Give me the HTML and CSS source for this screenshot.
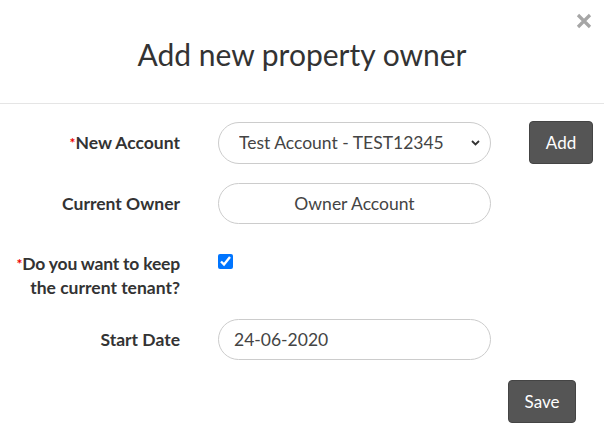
FILE: index.html
```html
<!DOCTYPE html>
<html>
<head>
<meta charset="utf-8">
<link rel="stylesheet" href="styles.css">
</head>
<body>
<div class="modal">
  <div class="modal-header">
    <h1 class="title">Add new property owner</h1>
    <button class="close" aria-label="Close">
      <svg width="16" height="16" viewBox="0 0 16 16"><path d="M2 2 L14 14 M14 2 L2 14" stroke="#a6a6a6" stroke-width="3.2" stroke-linecap="butt"/></svg>
    </button>
  </div>
  <div class="modal-body">
    <div class="row row-tall">
      <label class="label"><span class="req">*</span>New Account</label>
      <div class="control select-wrap">
        <select class="field select"><option>Test Account - TEST12345</option></select>
        <svg class="chevron" width="9" height="6" viewBox="0 0 9 6"><path d="M1 1 L4.5 4.5 L8 1" fill="none" stroke="#333" stroke-width="1.8"/></svg>
      </div>
      <button class="btn">Add</button>
    </div>
    <div class="row">
      <label class="label">Current Owner</label>
      <div class="control">
        <div class="field center">Owner Account</div>
      </div>
    </div>
    <div class="row row-top">
      <label class="label"><span class="req">*</span><span class="tight">Do you want to keep</span><br>the current tenant?</label>
      <div class="control">
        <input type="checkbox" class="check" checked>
      </div>
    </div>
    <div class="row">
      <label class="label">Start Date</label>
      <div class="control">
        <div class="field date">24-06-2020</div>
      </div>
    </div>
    <div class="footer">
      <button class="btn">Save</button>
    </div>
  </div>
</div>
</body>
</html>
```
FILE: styles.css
```css
html, body {
  margin: 0;
  padding: 0;
  background: #fff;
}
body {
  font-family: Lato, "Open Sans", sans-serif;
  color: #333;
  width: 604px;
  height: 445px;
  overflow: hidden;
}
.modal-header {
  position: relative;
  height: 103px;
  border-bottom: 1px solid #e5e5e5;
  display: flex;
  align-items: center;
  justify-content: center;
}
.title {
  margin: 0;
  font-size: 30px;
  font-weight: 400;
  color: #333;
  padding-top: 4px;
}
.close {
  position: absolute;
  top: 13px;
  right: 12px;
  border: 0;
  background: none;
  padding: 0;
  width: 16px;
  height: 16px;
}
.close svg { display: block; }
.modal-body {
  padding-top: 17px;
  display: flex;
  flex-direction: column;
  gap: 19px;
}
.row {
  display: grid;
  grid-template-columns: 180px 273px 64px;
  column-gap: 38px;
  align-items: center;
}
.row-top {
  align-items: start;
  padding-top: 9px;
}
.label {
  text-align: right;
  font-weight: 700;
  font-size: 17.5px;
  line-height: 24px;
  color: #333;
}
.tight { letter-spacing: -0.2px; }
.req {
  color: #e00;
  font-size: 14px;
  vertical-align: 1px;
}
.control { position: relative; }
.field {
  box-sizing: border-box;
  width: 273px;
  height: 41px;
  border: 1px solid #ccc;
  border-radius: 21px;
  font-family: Lato, "Open Sans", sans-serif;
  font-size: 17.5px;
  color: #444;
  background: #fff;
  display: flex;
  align-items: center;
}
.select {
  appearance: none;
  -webkit-appearance: none;
  height: 42px;
  padding: 0 0 0 20px;
  display: block;
}
.chevron {
  position: absolute;
  right: 11px;
  top: 18px;
}
.center { justify-content: center; }
.date { padding-left: 15px; }
.check {
  margin: 2px 0 0 0;
  width: 15px;
  height: 15px;
  accent-color: #0075ff;
}
.btn {
  box-sizing: border-box;
  height: 43px;
  background: #555;
  color: #fff;
  border: 1px solid #444;
  border-radius: 4px;
  font-family: Lato, "Open Sans", sans-serif;
  font-size: 17px;
  padding: 0 14px;
}
.row .btn { width: 64px; }
.footer {
  display: flex;
  justify-content: flex-end;
  padding-right: 28px;
  margin-top: 1px;
}
.footer .btn { width: 68px; }
```
